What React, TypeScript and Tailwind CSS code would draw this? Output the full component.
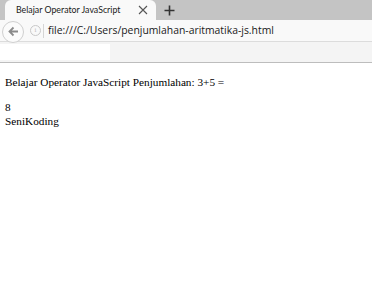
import { useState } from "react";

export default function App() {
  const [url] = useState("file:///C:/Users/penjumlahan-aritmatika-js.html");

  return (
    <div className="w-[372px] h-[300px] bg-white overflow-hidden relative">
      {/* tab strip */}
      <div className="h-[20px] bg-[#c4c4c4] flex items-end">
        <div className="ml-[5px] w-[151px] h-[20px] bg-[#f9f9f9] rounded-t-[6px] flex items-center pl-[11px] pr-[6px]">
          <span className="text-[8.8px] text-[#1a1a1a] font-['Lato',sans-serif] flex-1">
            Belajar Operator JavaScript
          </span>
          <svg width="10" height="10" viewBox="0 0 10 10" className="mr-[2px]">
            <path d="M1 1 L9 9 M9 1 L1 9" stroke="#555" strokeWidth="1.1" />
          </svg>
        </div>
        <div className="w-[26px] h-[20px] flex items-center justify-center">
          <svg width="11" height="11" viewBox="0 0 11 11">
            <path d="M5.5 0.5 V10.5 M0.5 5.5 H10.5" stroke="#333" strokeWidth="1.6" />
          </svg>
        </div>
      </div>

      {/* nav bar */}
      <div className="h-[22px] bg-[#f9f9f9] border-b border-[#dcdcdc] flex items-center relative">
        <div className="ml-[2px] w-[22px] h-[22px] mt-[2px] rounded-full border border-[#d0d0d0] bg-[#fbfbfb] flex items-center justify-center">
          <svg width="11" height="11" viewBox="0 0 11 11">
            <path d="M10 5.5 H2 M5.5 1.5 L1.5 5.5 L5.5 9.5" stroke="#8a8a8a" strokeWidth="1.8" fill="none" />
          </svg>
        </div>
        <div className="ml-[6px] w-[11px] h-[11px] rounded-full border border-[#c8c8c8] flex items-center justify-center text-[7px] text-[#bdbdbd] font-['Liberation_Serif',serif] leading-none">
          i
        </div>
        <div className="ml-[2px] w-px h-[14px] bg-[#d5d5d5]" />
        <span className="ml-[4px] text-[10.4px] text-[#1a1a1a] font-['Open_Sans',sans-serif]">{url}</span>
      </div>

      {/* bookmarks-ish row */}
      <div className="h-[21px] bg-[#f4f4f4] border-b border-[#bdbdbd] flex items-center">
        <div className="w-[110px] h-[16px] bg-white" />
      </div>

      {/* page content */}
      <div className="px-[5px] font-['Liberation_Serif',serif] text-[11.25px] leading-[14px] text-black">
        <p className="mt-[12px] mb-[11px]">Belajar Operator JavaScript Penjumlahan: 3+5 =</p>
        <div>8</div>
        <div>SeniKoding</div>
      </div>
    </div>
  );
}
